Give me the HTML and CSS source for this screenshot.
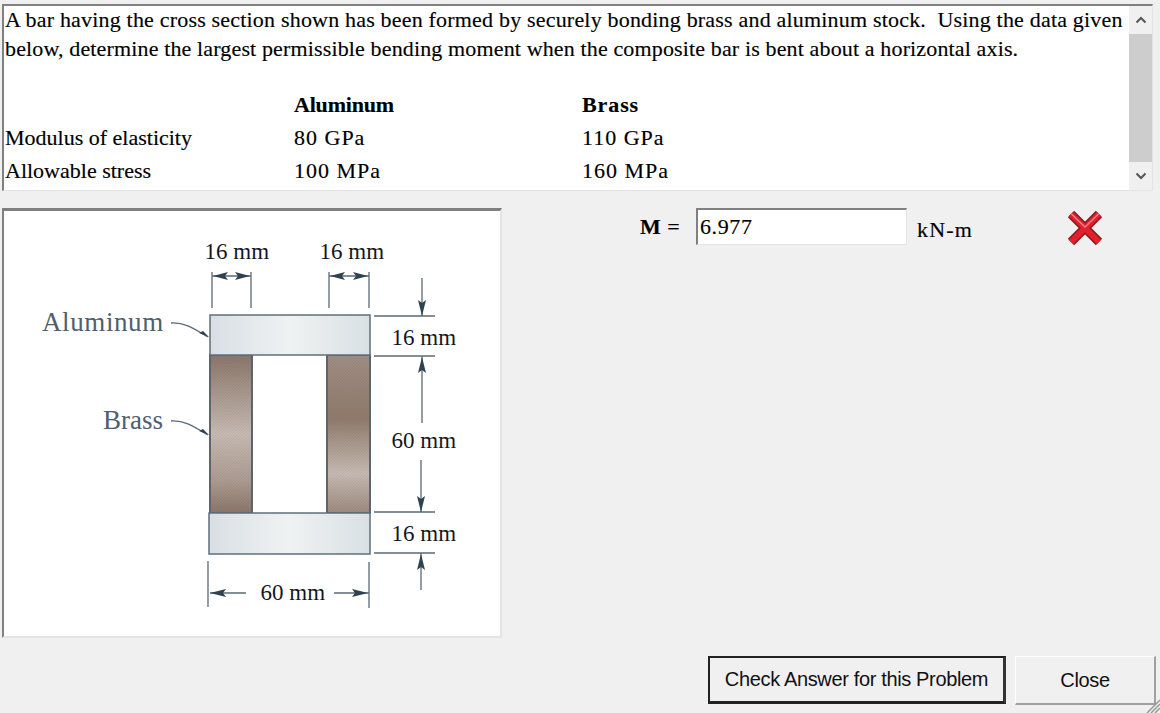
FILE: index.html
```html
<!DOCTYPE html>
<html lang="en">
    <head>
        <meta charset="utf-8">
        <title>Problem</title>
        <link rel="stylesheet" href="styles.css">
    </head>
    <body>
        <div class="problemPanel">
            <div class="problemText">
                <p class="statement">A bar having the cross section shown has been formed by securely bonding brass and aluminum stock.&nbsp; Using the data given<br><span class="lineTwo">below, determine the largest permissible bending moment when the composite bar is bent about a horizontal axis.</span></p>
                <div class="dataTable">
                    <span></span><span class="head">Aluminum</span><span class="head brassHead">Brass</span>
                    <span>Modulus of elasticity</span><span class="value">80 GPa</span><span class="value">110 GPa</span>
                    <span>Allowable stress</span><span class="value">100 MPa</span><span class="value">160 MPa</span>
                </div>
            </div>
            <div class="scrollbar">
                <div class="scrollButton">
                    <svg width="12" height="8" viewBox="0 0 12 8"><path d="M1.5 6.5 L6 2 L10.5 6.5" fill="none" stroke="#555" stroke-width="2"/></svg>
                </div>
                <div class="scrollThumb"></div>
                <div class="scrollButton">
                    <svg width="12" height="8" viewBox="0 0 12 8"><path d="M1.5 1.5 L6 6 L10.5 1.5" fill="none" stroke="#555" stroke-width="2"/></svg>
                </div>
            </div>
        </div>

        <div class="workArea">
            <div class="figurePanel">
                <svg class="figure" width="497" height="426" viewBox="4 211 497 426">
                    <defs>
                        <linearGradient id="alu" x1="0" y1="0" x2="1" y2="0">
                            <stop offset="0" stop-color="#d8dfe3"/>
                            <stop offset="0.5" stop-color="#eff2f3"/>
                            <stop offset="1" stop-color="#d9e0e3"/>
                        </linearGradient>
                        <linearGradient id="brassLeft" x1="0" y1="0" x2="0" y2="1">
                            <stop offset="0" stop-color="#8a7569"/>
                            <stop offset="0.5" stop-color="#c6bab2"/>
                            <stop offset="0.8" stop-color="#ab9a90"/>
                            <stop offset="1" stop-color="#8a7569"/>
                        </linearGradient>
                        <linearGradient id="brassRight" x1="0" y1="0" x2="0" y2="1">
                            <stop offset="0" stop-color="#a08d82"/>
                            <stop offset="0.4" stop-color="#8f7a6c"/>
                            <stop offset="0.75" stop-color="#c6bab2"/>
                            <stop offset="1" stop-color="#9c897e"/>
                        </linearGradient>
                        <pattern id="grain" width="3" height="3" patternUnits="userSpaceOnUse">
                            <path d="M0 3L3 0" stroke="#4a3a32" stroke-opacity="0.08" stroke-width="1"/>
                        </pattern>
                    </defs>

                    <rect x="210" y="355" width="42" height="158" fill="url(#brassLeft)" stroke="#5d666c" stroke-width="2"/>
                    <rect x="210" y="355" width="42" height="158" fill="url(#grain)"/>
                    <rect x="327" y="355" width="43" height="158" fill="url(#brassRight)" stroke="#5d666c" stroke-width="2"/>
                    <rect x="327" y="355" width="43" height="158" fill="url(#grain)"/>
                    <rect x="210" y="315" width="160" height="40" fill="url(#alu)" stroke="#5f6f7c" stroke-width="1.5"/>
                    <rect x="209" y="513" width="161" height="41" fill="url(#alu)" stroke="#5f6f7c" stroke-width="1.5"/>

                    <g class="dimLine">
                        <path d="M212 272V308M251 272V308M329 272V308M369 272V308"/>
                        <path d="M212 276H251M329 276H369"/>
                        <path d="M374 316H435M374 356H435M374 512H435M374 553H435"/>
                        <path d="M422 278V316M422 356V423M421 460V512M421 553V590"/>
                        <path d="M208 561V607M369 562V608"/>
                        <path d="M210 593H246M334 593H369"/>
                        <path d="M171 323C186 322 196 330 208 337M171 421C186 420 196 428 208 435"/>
                    </g>
                    <g class="dimArrow">
                        <path d="M213 276L228 272L225 276L228 280ZM250 276L235 272L238 276L235 280Z"/>
                        <path d="M330 276L345 272L342 276L345 280ZM368 276L353 272L356 276L353 280Z"/>
                        <path d="M422 316L418 300L422 303L426 300ZM422 357L418 373L422 370L426 373Z"/>
                        <path d="M421 512L417 496L421 499L425 496ZM421 554L417 570L421 567L425 570Z"/>
                        <path d="M210 593L226 589L223 593L226 597ZM368 593L352 589L355 593L352 597Z"/>
                        <path d="M209 337L199 333L203 331ZM209 435L199 431L203 429Z"/>
                    </g>

                    <text class="dimText" x="204.5" y="259">16 mm</text>
                    <text class="dimText" x="319.5" y="259">16 mm</text>
                    <text class="dimText" x="391.5" y="345">16 mm</text>
                    <text class="dimText" x="391.5" y="448">60 mm</text>
                    <text class="dimText" x="391.5" y="541">16 mm</text>
                    <text class="dimText" x="260.5" y="600">60 mm</text>
                    <text class="matText" x="42" y="331">Aluminum</text>
                    <text class="matText brassText" x="103" y="429">Brass</text>
                </svg>
            </div>

            <div class="answerColumn">
                <div class="answerRow">
                    <span class="answerLabel"><b>M</b> =</span>
                    <input class="answerInput" type="text" value="6.977">
                    <span class="answerUnit">kN-m</span>
                    <svg class="wrongMark" width="38" height="36" viewBox="0 0 38 36">
                        <path d="M5 4L33 32M33 4L5 32" stroke="#8c1a22" stroke-width="9"/>
                        <path d="M5 4L33 32M33 4L5 32" stroke="#e3202c" stroke-width="6"/>
                        <path d="M5 3.5L19 17L33 3.5" fill="none" stroke="#f2808a" stroke-width="1.5"/>
                    </svg>
                </div>
            </div>
        </div>

        <div class="buttonBar">
            <button class="button defaultButton" type="button">Check Answer for this Problem</button>
            <button class="button" type="button">Close</button>
        </div>
        <svg class="grip" width="14" height="14" viewBox="0 0 14 14"><path d="M14 1L1 14M14 5L5 14M14 9L9 14" stroke="#999" stroke-width="1.5"/></svg>
    </body>
</html>
```

FILE: styles.css
```css
* {
    box-sizing: border-box;
}
html, body {
    height: 100%;
}
body {
    margin: 0;
    background-color: #f0f0f0;
    font-family: "Liberation Serif", serif;
    font-size: 22px;
    color: #000;
    overflow: hidden;
    position: relative;
    -webkit-text-stroke: 0.15px #000;
}
.problemPanel {
    display: flex;
    height: 187px;
    margin: 4px 7px 0 2px;
    background-color: white;
    border-style: solid;
    border-width: 2px 1px 1px 2px;
    border-color: #808080 #e4e4e4 #e4e4e4 #808080;
}
.problemText {
    flex: 1;
    padding: 0 0 0 1px;
    min-width: 0;
}
.statement {
    margin: -1px 0 0 0;
    line-height: 29px;
    white-space: nowrap;
    letter-spacing: 0.19px;
}
.lineTwo {
    letter-spacing: 0.14px;
}
.dataTable {
    display: grid;
    grid-template-columns: 289px 288px 1fr;
    grid-auto-rows: 33px;
    align-items: center;
    margin-top: 25px;
}
.head {
    font-weight: bold;
    letter-spacing: -0.2px;
}
.brassHead {
    letter-spacing: 0.9px;
}
.value {
    letter-spacing: 1px;
}
.scrollbar {
    width: 23px;
    display: flex;
    flex-direction: column;
    background-color: #f0f0f0;
}
.scrollButton {
    height: 28px;
    display: flex;
    align-items: center;
    justify-content: center;
}
.scrollThumb {
    flex: 1;
    background-color: #cdcdcd;
}
.workArea {
    display: flex;
    margin: 17px 0 0 2px;
}
.figurePanel {
    width: 500px;
    height: 430px;
    background-color: white;
    border-style: solid;
    border-width: 3px 2px 2px 2px;
    border-color: #808080 #e4e4e4 #e4e4e4 #808080;
}
.figure {
    display: block;
}
.dimLine path {
    fill: none;
    stroke: #5c6a76;
    stroke-width: 1.3;
}
.dimArrow path {
    fill: #2f4252;
}
.dimText {
    font-size: 23px;
    fill: #14161c;
    -webkit-text-stroke: 0.15px #14161c;
}
.matText {
    font-size: 27px;
    letter-spacing: 0.6px;
    fill: #4f5f6e;
    -webkit-text-stroke: 0;
}
.brassText {
    letter-spacing: 0;
}
.answerColumn {
    flex: 1;
}
.answerRow {
    display: flex;
    align-items: flex-start;
    padding-left: 138px;
}
.answerLabel {
    width: 56px;
    margin-top: 6px;
    white-space: nowrap;
    word-spacing: 1px;
}
.answerInput {
    width: 211px;
    height: 37px;
    padding: 0 0 0 2px;
    border-style: solid;
    border-width: 2px 1px 1px 2px;
    border-color: #808080 #e4e4e4 #e4e4e4 #808080;
    background-color: white;
    font-family: "Liberation Serif", serif;
    font-size: 22px;
    letter-spacing: 0.6px;
    color: #000;
    border-radius: 0;
    outline: 0;
}
.answerUnit {
    margin: 9px 0 0 10px;
    width: 150px;
    letter-spacing: 1.2px;
}
.wrongMark {
    margin: 2px 0 0 -1px;
}
.buttonBar {
    display: flex;
    gap: 9px;
    margin: 18px 4px 0 0;
    justify-content: flex-end;
}
.button {
    width: 141px;
    height: 49px;
    background-color: #f0f0f0;
    border-style: solid;
    border-width: 1px 2px 2px 1px;
    border-color: #ffffff #a0a0a0 #a0a0a0 #ffffff;
    font-family: "Liberation Sans", sans-serif;
    font-size: 20px;
    letter-spacing: -0.35px;
    color: #111;
    padding: 0;
    -webkit-text-stroke: 0;
}
.defaultButton {
    width: 298px;
    height: 48px;
    border-width: 2px 3px 3px 2px;
    border-color: #222 #333 #222 #222;
}
.grip {
    position: absolute;
    right: 0;
    bottom: 0;
}
```
